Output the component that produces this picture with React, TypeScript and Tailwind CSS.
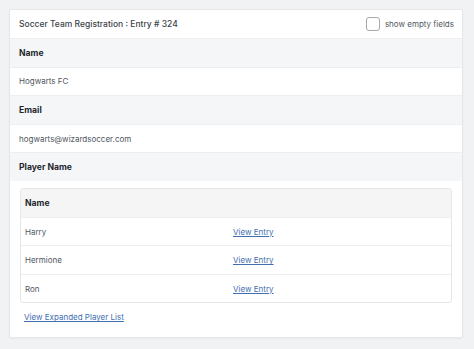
const values = [
  { label: "Name", value: "Hogwarts FC" },
  { label: "Email", value: "hogwarts@wizardsoccer.com" },
]

const players = ["Harry", "Hermione", "Ron"]

export default function App() {
  return (
    <div className="w-[474px] h-[349px] bg-[#f1f2f4] pt-[9px] pl-[9px] font-['Inter',sans-serif] text-[8px] leading-[12px]">
      <div className="w-[454px] h-[329px] bg-white border border-[#e4e6ea] rounded-[2px] shadow-[0_1px_2px_rgba(0,0,0,0.04)]">
        <div className="h-[28px] flex items-center justify-between pl-[9px] pr-[8px]">
          <span className="text-[8.5px] font-medium text-[#3c434a]">Soccer Team Registration : Entry # 324</span>
          <label className="flex items-center gap-[5px]">
            <span className="w-[14px] h-[14px] border border-[#a7aaad] rounded-[3px] bg-white"></span>
            <span className="text-[8px] text-[#50575e]">show empty fields</span>
          </label>
        </div>

        {values.map((v) => (
          <div key={v.label}>
            <div className="h-[28.6px] flex items-center pl-[9px] bg-[#f5f6f8] border-t border-[#eceef1]">
              <span className="text-[8.6px] font-bold text-[#23282d]">{v.label}</span>
            </div>
            <div className="h-[28.6px] flex items-center pl-[9px] border-t border-[#eceef1]">
              <span className="text-[8px] text-[#50575e]">{v.value}</span>
            </div>
          </div>
        ))}

        <div className="h-[28.6px] flex items-center pl-[9px] bg-[#f5f6f8] border-t border-[#eceef1]">
          <span className="text-[8.6px] font-bold text-[#23282d]">Player Name</span>
        </div>

        <div className="px-[10px] pt-[7px]">
          <div className="border border-[#e4e6ea] rounded-[3px]">
            <div className="h-[28px] flex items-center pl-[4px] bg-[#f5f5f6]">
              <span className="text-[8.6px] font-bold text-[#23282d]">Name</span>
            </div>
            {players.map((p) => (
              <div key={p} className="h-[28.5px] grid grid-cols-[208px_1fr] items-center pl-[4px] border-t border-[#eceef1]">
                <span className="text-[8px] text-[#50575e]">{p}</span>
                <a href="#" className="text-[8px] text-[#3f6fb0] underline">View Entry</a>
              </div>
            ))}
          </div>
          <div className="pt-[8px] pl-[4px]">
            <a href="#" className="text-[8px] text-[#3f6fb0] underline">View Expanded Player List</a>
          </div>
        </div>
      </div>
    </div>
  )
}
